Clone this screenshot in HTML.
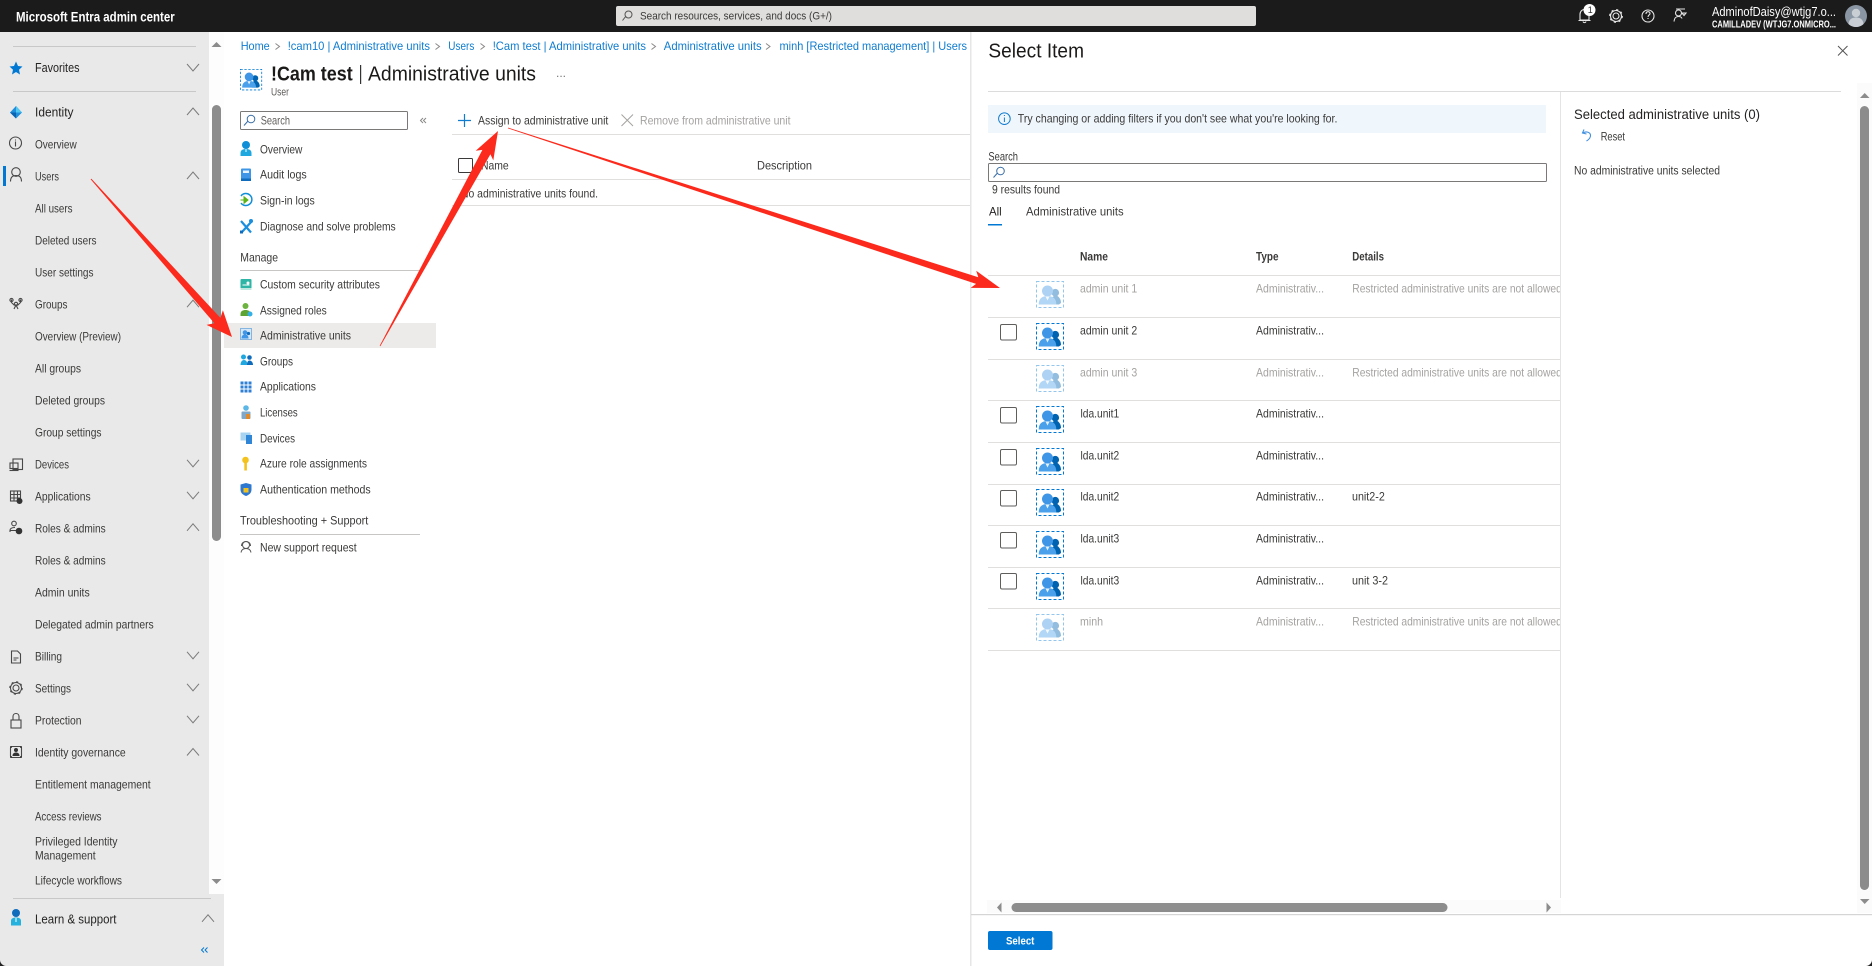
<!DOCTYPE html>
<html lang="en"><head><meta charset="utf-8"><title>Microsoft Entra admin center</title>
<style>
html,body{margin:0;padding:0;width:1872px;height:966px;overflow:hidden;background:#fff}
svg{display:block;font-family:"Liberation Sans",sans-serif}
text{font-size:12px;fill:#3b3a39}
.h{font-size:13px;fill:#252423}
.b{fill:#0f7ccf}
.g{fill:#a5a3a1}
.w{fill:#fff}
.s{fill:none;stroke:#7b7b7b;stroke-width:1}
.ic{fill:none;stroke:#484848;stroke-width:1.1}
.l{fill:#e1dfdd}
</style></head><body>
<svg xmlns="http://www.w3.org/2000/svg" width="1872" height="966" viewBox="0 0 1872 966">
<defs>
<path id="cd" d="M-6-3.5 0 3.5 6-3.5" fill="none" stroke="#7b7b7b"/>
<path id="cu" d="M-6 3.5 0-3.5 6 3.5" fill="none" stroke="#7b7b7b"/>
<path id="gt" d="M-3.5-3 .5 0-3.5 3" fill="none" stroke="#8a8886" transform="translate(0,0)"/>
<g id="au">
<rect x=".5" y=".5" width="27" height="26" fill="#fff" stroke="#0078d4" stroke-dasharray="3 2"/>
<circle cx="19.300" cy="11.700" r="3.800" fill="#0063b1"/><path d="M15 23.500c0-6 2-9 4.500-9s5.500 3 5.500 7.500l-2 1.500z" fill="#0063b1"/>
<circle cx="11.500" cy="10" r="5.500" fill="#3f96e6"/><path d="M2.700 23.500c0-6 3.500-8.500 8.800-8.500s8.800 2.500 8.800 8.500z" fill="#4aa0ea"/><path d="M9.500 15.500l2 4 2-4z" fill="#e6f2fc"/>
</g>
<g id="cb"><rect x=".5" y=".5" width="16" height="15.500" rx="1.500" fill="#fff" stroke="#5f5e5c" stroke-width="1"/></g>
<g id="mag" fill="none" stroke="#3a6ea5" stroke-width="1"><circle cx="2" cy="-2" r="3.800"/><path d="M-1-.000-5 4.500"/></g>
</defs>

<!-- page bg -->
<rect width="1872" height="966" fill="#fff"/>

<!-- sidebar -->
<rect x="0" y="32" width="209" height="934" fill="#e9e9e9"/>
<rect x="209" y="32" width="15" height="862" fill="#fdfdfd"/>
<rect x="209" y="894" width="15" height="72" fill="#e9e9e9"/>
<rect x="212" y="105" width="9" height="436" rx="4.500" fill="#8c8c8c"/>
<path d="M211.500 47 216.500 42 221.500 47z" fill="#8c8c8c"/><path d="M211.500 879 216.500 884 221.500 879z" fill="#8c8c8c"/>
<rect x="13" y="46" width="183" height="1" fill="#c8c8c8"/>
<rect x="13" y="91" width="183" height="1" fill="#c8c8c8"/>
<rect x="13" y="898" width="198" height="1" fill="#c8c8c8"/>
<rect x="3" y="166" width="3" height="20" fill="#0078d4"/>

<text class="h" x="35" y="72" textLength="44.500" lengthAdjust="spacingAndGlyphs">Favorites</text>
<text class="h" x="35" y="116.500" textLength="38.500" lengthAdjust="spacingAndGlyphs">Identity</text>
<text x="35" y="148.500" textLength="41.700" lengthAdjust="spacingAndGlyphs">Overview</text>
<text x="35" y="180.500" textLength="24" lengthAdjust="spacingAndGlyphs">Users</text>
<text x="35" y="212.500" textLength="37.500" lengthAdjust="spacingAndGlyphs">All users</text>
<text x="35" y="244.500" textLength="61.500" lengthAdjust="spacingAndGlyphs">Deleted users</text>
<text x="35" y="276.500" textLength="58.500" lengthAdjust="spacingAndGlyphs">User settings</text>
<text x="35" y="308.500" textLength="32.500" lengthAdjust="spacingAndGlyphs">Groups</text>
<text x="35" y="340.700" textLength="86" lengthAdjust="spacingAndGlyphs">Overview (Preview)</text>
<text x="35" y="372.700" textLength="46" lengthAdjust="spacingAndGlyphs">All groups</text>
<text x="35" y="404.700" textLength="70" lengthAdjust="spacingAndGlyphs">Deleted groups</text>
<text x="35" y="436.700" textLength="66.500" lengthAdjust="spacingAndGlyphs">Group settings</text>
<text x="35" y="468.700" textLength="34" lengthAdjust="spacingAndGlyphs">Devices</text>
<text x="35" y="500.700" textLength="55.700" lengthAdjust="spacingAndGlyphs">Applications</text>
<text x="35" y="532.700" textLength="70.700" lengthAdjust="spacingAndGlyphs">Roles &amp; admins</text>
<text x="35" y="564.700" textLength="70.700" lengthAdjust="spacingAndGlyphs">Roles &amp; admins</text>
<text x="35" y="596.700" textLength="54.700" lengthAdjust="spacingAndGlyphs">Admin units</text>
<text x="35" y="628.700" textLength="118.700" lengthAdjust="spacingAndGlyphs">Delegated admin partners</text>
<text x="35" y="660.700" textLength="27" lengthAdjust="spacingAndGlyphs">Billing</text>
<text x="35" y="692.700" textLength="36" lengthAdjust="spacingAndGlyphs">Settings</text>
<text x="35" y="724.700" textLength="46.500" lengthAdjust="spacingAndGlyphs">Protection</text>
<text x="35" y="756.700" textLength="90.700" lengthAdjust="spacingAndGlyphs">Identity governance</text>
<text x="35" y="788.700" textLength="115.700" lengthAdjust="spacingAndGlyphs">Entitlement management</text>
<text x="35" y="820.700" textLength="66.500" lengthAdjust="spacingAndGlyphs">Access reviews</text>
<text x="35" y="845.700" textLength="82.500" lengthAdjust="spacingAndGlyphs">Privileged Identity</text>
<text x="35" y="859.700" textLength="60.700" lengthAdjust="spacingAndGlyphs">Management</text>
<text x="35" y="884.700" textLength="87" lengthAdjust="spacingAndGlyphs">Lifecycle workflows</text>
<text class="h" x="35" y="923.500" textLength="81.500" lengthAdjust="spacingAndGlyphs">Learn &amp; support</text>

<use href="#cd" x="193" y="67.500"/><use href="#cu" x="193" y="111.500"/><use href="#cu" x="193" y="175.500"/><use href="#cu" x="193" y="303.700"/>
<use href="#cd" x="193" y="463.300"/><use href="#cd" x="193" y="495.300"/><use href="#cu" x="193" y="527.300"/>
<use href="#cd" x="193" y="655.300"/><use href="#cd" x="193" y="687.300"/><use href="#cd" x="193" y="719.300"/><use href="#cu" x="193" y="752"/><use href="#cu" x="208" y="918.300"/>
<path d="M204 947.500l-2.500 2.500 2.500 2.500M207.500 947.500l-2.500 2.500 2.500 2.500" fill="none" stroke="#0078d4"/>

<!-- sidebar icons -->
<polygon points="16,61.500 18,66 22.500,66.500 19,69.700 20,74.500 16,72 12,74.500 13,69.700 9.500,66.500 14,66" fill="#0078d4"/>
<polygon points="16,106 22,112.500 16,118.500 10,112.500" fill="#1f8fdc"/><polygon points="16,106 22,112.500 16,112.500" fill="#50c8f0"/><polygon points="10,112.500 16,118.500 16,112.500" fill="#0a63b0"/>
<circle class="ic" cx="15.500" cy="143" r="6"/><path class="ic" d="M15.500 141.500v5M15.500 139.500v1"/>
<circle class="ic" cx="16" cy="172" r="4.300"/><path class="ic" d="M10.500 181.500c0-4.500 2.500-6 5.500-6s5.500 1.500 5.500 6"/>
<path class="ic" d="M11 302l3 3 4 0 3-3M14 309l2-4 2 4M11.500 299.500v2M20.500 299.500v2" /><circle class="ic" cx="11.500" cy="300" r="1.600"/><circle class="ic" cx="20.500" cy="300" r="1.600"/><circle class="ic" cx="16" cy="304" r="1.700"/>
<rect class="ic" x="13" y="459" width="9.500" height="10.500"/><rect class="ic" x="10" y="463" width="8" height="5.500" fill="#e9e9e9"/><path class="ic" d="M9.500 470.500h9"/>
<rect class="ic" x="10.500" y="491" width="10" height="10"/><path class="ic" d="M14 491v10M17.500 491v10M10.500 494.500h10M10.500 498h10"/><circle cx="19.500" cy="501" r="3" fill="#333"/>
<circle class="ic" cx="14" cy="523.500" r="2.300"/><path class="ic" d="M10 532v-1.500c0-2 2-3 5-3"/><rect x="10" y="530" width="7" height="1" fill="#444"/><circle cx="19" cy="531" r="3.300" fill="#333"/>
<path class="ic" d="M11.500 651h6l3 3v9h-9zM13.500 658h5M13.500 660h3"/>
<circle class="ic" cx="16" cy="688" r="3"/><circle cx="16" cy="688" r="5.500" fill="none" stroke="#484848" stroke-width="1"/><circle cx="16" cy="688" r="6" fill="none" stroke="#484848" stroke-width="1.500" stroke-dasharray="2 2.700"/>
<rect class="ic" x="11" y="720" width="10" height="8"/><path class="ic" d="M13 720v-3.500c0-4 6-4 6 0v3.500"/>
<rect class="ic" x="10.500" y="746.500" width="11" height="11" rx="1.500"/><circle cx="16" cy="750" r="2" fill="#333"/><path d="M12.500 756c0-2.500 1.500-3.500 3.500-3.500s3.500 1 3.500 3.500z" fill="#333"/><circle cx="11" cy="747" r="1" fill="#333"/><circle cx="21" cy="747" r="1" fill="#333"/><circle cx="11" cy="757" r="1" fill="#333"/><circle cx="21" cy="757" r="1" fill="#333"/>
<circle cx="16" cy="913" r="4" fill="#0f6cbd"/><path d="M11 925.500v-4.500c0-2.500 2-3.500 5-3.500s5 1 5 3.500v4.500z" fill="#24b1dd"/><path d="M15.500 918h1v4h-1z" fill="#fff"/>

<!-- top bar -->
<rect width="1872" height="32" fill="#1b1b1b"/>
<text class="w" x="16" y="21.500" font-size="13" font-weight="bold" style="font-size:13.500px;font-weight:bold" textLength="158.700" lengthAdjust="spacingAndGlyphs">Microsoft Entra admin center</text>
<rect x="616" y="6" width="640" height="20" rx="2" fill="#e0dedc"/>
<g transform="translate(627,16)" fill="none" stroke="#555"><circle cx="1.500" cy="-1.500" r="3.500"/><path d="M-1-0-4.500 4.500"/></g>
<text x="640" y="19.700" style="font-size:11px" textLength="192" lengthAdjust="spacingAndGlyphs">Search resources, services, and docs (G+/)</text>

<g fill="none" stroke="#e6e6e6" stroke-width="1.100">
<path d="M1580 20v-5.500c0-3 2-5 4.500-5s4.500 2 4.500 5v5.500zM1578.500 20.500h12M1583 21.500c.5 1.500 2.500 1.500 3 0"/>
<circle cx="1616" cy="16" r="3"/><circle cx="1616" cy="16" r="5.500"/><circle cx="1616" cy="16" r="6" stroke-width="1.800" stroke-dasharray="2 2.700"/>
<circle cx="1648" cy="16" r="6"/><path d="M1646 14c0-3 4-3 4-.5 0 1.500-2 1.500-2 3.500M1648 18v1"/>
<circle cx="1678.500" cy="13" r="3"/><path d="M1674 21.500c.5-4 2-5 4.500-5 1.500 0 3 .5 3.500 2M1676 9h9M1682 13h4l-2 2.500z"/>
</g>
<circle cx="1589.500" cy="10" r="6" fill="#fff"/><text x="1587.700" y="13" style="font-size:9px;fill:#333">1</text>
<text class="w" x="1712" y="16" style="font-size:13px" textLength="124" lengthAdjust="spacingAndGlyphs">AdminofDaisy@wtjg7.o...</text>
<text class="w" x="1712" y="27.500" style="font-size:10px;font-weight:bold" textLength="124" lengthAdjust="spacingAndGlyphs">CAMILLADEV (WTJG7.ONMICRO...</text>
<circle cx="1856" cy="16" r="11" fill="#8a96a3"/><circle cx="1856" cy="13" r="4.200" fill="#c9ced4"/><path d="M1848.500 24c.5-5 3.500-6.500 7.500-6.500s7 1.500 7.500 6.500c-2 2-5 3-7.500 3s-5.500-1-7.500-3z" fill="#c9ced4"/>

<!-- breadcrumb -->
<text class="b" x="240.700" y="50" textLength="29" lengthAdjust="spacingAndGlyphs">Home</text>
<use href="#gt" x="279" y="46.500"/>
<text class="b" x="287.700" y="50" textLength="142.300" lengthAdjust="spacingAndGlyphs">!cam10 | Administrative units</text>
<use href="#gt" x="439" y="46.500"/>
<text class="b" x="448.300" y="50" textLength="26" lengthAdjust="spacingAndGlyphs">Users</text>
<use href="#gt" x="484" y="46.500"/>
<text class="b" x="492.700" y="50" textLength="153.300" lengthAdjust="spacingAndGlyphs">!Cam test | Administrative units</text>
<use href="#gt" x="655" y="46.500"/>
<text class="b" x="663.800" y="50" textLength="97.800" lengthAdjust="spacingAndGlyphs">Administrative units</text>
<use href="#gt" x="769.500" y="46.500"/>
<text class="b" x="779.500" y="50" textLength="187.500" lengthAdjust="spacingAndGlyphs">minh [Restricted management] | Users</text>

<!-- title -->
<g transform="translate(240,69) scale(.79)"><use href="#au"/></g>
<text x="271" y="80.500" style="font-size:20px;font-weight:bold;fill:#1b1a19" textLength="81.700" lengthAdjust="spacingAndGlyphs">!Cam test</text>
<rect x="360" y="65" width="1.200" height="19" fill="#333"/>
<text x="368" y="80.500" style="font-size:20px;fill:#1b1a19" textLength="168" lengthAdjust="spacingAndGlyphs">Administrative units</text>
<text x="556" y="77" style="font-size:12px;fill:#777">...</text>
<text x="271" y="95.500" style="font-size:11px;fill:#605e5c" textLength="18" lengthAdjust="spacingAndGlyphs">User</text>

<!-- blade menu -->
<rect x="240.500" y="111.500" width="167" height="18" rx="1" fill="#fff" stroke="#7a7977"/>
<use href="#mag" x="249" y="121"/>
<text x="260.700" y="124.500" style="fill:#605e5c" textLength="29.300" lengthAdjust="spacingAndGlyphs">Search</text>
<path d="M423 118l-2.500 2.500 2.500 2.500M426 118l-2.500 2.500 2.500 2.500" fill="none" stroke="#8a8886"/>

<rect x="224" y="323" width="212" height="25" fill="#edebe9"/>
<text x="260" y="153.700" textLength="42.300" lengthAdjust="spacingAndGlyphs">Overview</text>
<text x="260" y="178.700" textLength="46.700" lengthAdjust="spacingAndGlyphs">Audit logs</text>
<text x="260" y="204.700" textLength="54.700" lengthAdjust="spacingAndGlyphs">Sign-in logs</text>
<text x="260" y="230.700" textLength="135.700" lengthAdjust="spacingAndGlyphs">Diagnose and solve problems</text>
<text x="240.300" y="261.700" textLength="37.700" lengthAdjust="spacingAndGlyphs">Manage</text>
<rect x="240" y="270" width="180" height="1" fill="#c8c6c4"/>
<text x="260" y="288.700" textLength="120" lengthAdjust="spacingAndGlyphs">Custom security attributes</text>
<text x="260" y="314.700" textLength="66.700" lengthAdjust="spacingAndGlyphs">Assigned roles</text>
<text x="260" y="339.700" textLength="91" lengthAdjust="spacingAndGlyphs">Administrative units</text>
<text x="260" y="365.700" textLength="33" lengthAdjust="spacingAndGlyphs">Groups</text>
<text x="260" y="390.700" textLength="56" lengthAdjust="spacingAndGlyphs">Applications</text>
<text x="260" y="416.700" textLength="37.700" lengthAdjust="spacingAndGlyphs">Licenses</text>
<text x="260" y="442.700" textLength="35" lengthAdjust="spacingAndGlyphs">Devices</text>
<text x="260" y="467.700" textLength="107" lengthAdjust="spacingAndGlyphs">Azure role assignments</text>
<text x="260" y="493.700" textLength="110.700" lengthAdjust="spacingAndGlyphs">Authentication methods</text>
<text x="240" y="524.700" textLength="128.300" lengthAdjust="spacingAndGlyphs">Troubleshooting + Support</text>
<rect x="240" y="534" width="180" height="1" fill="#c8c6c4"/>
<text x="260" y="551.700" textLength="96.700" lengthAdjust="spacingAndGlyphs">New support request</text>

<!-- blade icons -->
<circle cx="246" cy="145" r="4" fill="#0f8fd8"/><path d="M240.500 156v-3c0-3 2.500-4 5.500-4s5.500 1 5.500 4v3z" fill="#1fa7e0"/><path d="M245.500 149h1v3h-1z" fill="#fff"/>
<rect x="241" y="168.500" width="10" height="12.500" rx="1" fill="#3f96e6"/><rect x="243" y="170.500" width="6" height="2.500" fill="#e8f3fc"/><rect x="241" y="178.500" width="10" height="2.500" fill="#0f6cbd"/>
<path d="M241 197a6 6 0 1 1 0 7" fill="none" stroke="#0f8fd8" stroke-width="1.500" transform="translate(0,-1)"/><path d="M240.500 200h5M244 196.700l4 3.300-4 3.300z" fill="#5bb318" stroke="#5bb318"/>
<path d="M241 221l10 11.500M252 221l-10 11" stroke="#1a8fdd" stroke-width="2.200" fill="none"/><circle cx="251" cy="221" r="2" fill="#1a8fdd"/><rect x="240" y="230.500" width="3" height="3" fill="#0f6cbd"/>
<rect x="240.500" y="279" width="11" height="11" rx="1" fill="#2fb5a5"/><rect x="240.500" y="288" width="11" height="2" fill="#bfe8e1"/><circle cx="248" cy="283" r="1.500" fill="#fff"/><path d="M242.500 285h7" stroke="#fff"/>
<circle cx="245.500" cy="306" r="3" fill="#6db33f"/><path d="M240.500 316v-2c0-3 2.500-4 5-4s5 1 5 4v2z" fill="#5ea432"/><circle cx="250" cy="314" r="2.500" fill="#33b0e6"/>
<rect x="240.500" y="328.500" width="11" height="11" fill="#d6e7f7" stroke="#86b6e0"/><circle cx="245" cy="332.500" r="2.300" fill="#3f96e6"/><path d="M241.500 338.500c0-3 1.500-4 3.500-4s3.500 1 3.500 4z" fill="#3f96e6"/><circle cx="248.500" cy="333.500" r="1.600" fill="#0f6cbd"/>
<circle cx="243.500" cy="357" r="2.500" fill="#1fa7e0"/><circle cx="249.500" cy="357.500" r="2.300" fill="#0f6cbd"/><path d="M240.500 365c0-3 1.500-5 3.500-5s3.500 2 3.500 5z" fill="#1fa7e0"/><path d="M247 365c0-3 1-4.500 2.500-4.500s3.500 1.500 3.500 4.500z" fill="#0f6cbd"/>
<g fill="#2f7fd6"><rect x="240.500" y="381.500" width="3" height="3"/><rect x="244.500" y="381.500" width="3" height="3"/><rect x="248.500" y="381.500" width="3" height="3"/><rect x="240.500" y="385.500" width="3" height="3"/><rect x="244.500" y="385.500" width="3" height="3"/><rect x="248.500" y="385.500" width="3" height="3"/><rect x="240.500" y="389.500" width="3" height="3"/><rect x="244.500" y="389.500" width="3" height="3"/><rect x="248.500" y="389.500" width="3" height="3"/></g>
<circle cx="246" cy="408" r="2.800" fill="#5cb6e6"/><rect x="241.500" y="411.500" width="9" height="7.500" rx="1" fill="#7fa8c8"/><rect x="246" y="414" width="4" height="5" fill="#e08a2e"/>
<rect x="240.500" y="432.500" width="10" height="8" fill="#a8d4f2"/><rect x="246" y="435" width="6" height="9" fill="#2f86d6"/>
<circle cx="245.500" cy="460" r="3.300" fill="#f4c21c"/><rect x="244.300" y="462" width="2.600" height="8.500" fill="#f4c21c"/>
<path d="M246 483l5.500 1.500v5c0 3.500-2.500 5.500-5.500 6.500-3-1-5.500-3-5.500-6.500v-5z" fill="#2f78d0"/><rect x="243.500" y="488" width="5" height="4.500" fill="#f4c21c"/>
<circle cx="246" cy="545" r="3.500" fill="none" stroke="#555"/><path d="M241 552.500c.5-3 2.500-4 5-4s4.500 1 5 4M241.500 546c0-6 9-6 9 0" fill="none" stroke="#555"/>

<!-- toolbar & list -->
<path d="M464.500 114v13M458 120.500h13" stroke="#0f7ccf" stroke-width="1.200"/>
<text x="478" y="124.700" textLength="130.300" lengthAdjust="spacingAndGlyphs">Assign to administrative unit</text>
<path d="M621.500 114.500l11.500 11.500M633 114.500l-11.500 11.500" stroke="#a5a3a1" fill="none"/>
<text class="g" x="640" y="124.700" textLength="150.500" lengthAdjust="spacingAndGlyphs">Remove from administrative unit</text>
<rect x="452" y="134" width="518" height="1" class="l"/>
<rect x="458.500" y="158.500" width="14" height="14" rx="1" fill="#fff" stroke="#3b3a39" stroke-width="1"/>
<text x="481" y="169.700" textLength="27.700" lengthAdjust="spacingAndGlyphs">Name</text>
<text x="757" y="169.700" textLength="55" lengthAdjust="spacingAndGlyphs">Description</text>
<rect x="452" y="179" width="518" height="1" class="l"/>
<text x="461" y="197.700" textLength="137" lengthAdjust="spacingAndGlyphs">No administrative units found.</text>
<rect x="452" y="205" width="518" height="1" class="l"/>

<!-- panel -->
<rect x="971" y="32" width="901" height="934" fill="#fff"/>
<rect x="970" y="32" width="1.500" height="934" fill="#e6e6e6"/>
<text x="988.400" y="57.500" style="font-size:20px;fill:#1b1a19" textLength="95.600" lengthAdjust="spacingAndGlyphs">Select Item</text>
<path d="M1838 46l9.500 9.500M1847.500 46l-9.500 9.500" stroke="#555" fill="none"/>
<rect x="988" y="91" width="853" height="1" fill="#dcdcdc"/>
<rect x="1560" y="92" width="1" height="806" fill="#e4e4e4"/>
<rect x="988" y="105" width="558" height="28" fill="#eff6fc"/>
<circle cx="1004.400" cy="118.700" r="5.800" fill="none" stroke="#0f7ccf"/><path d="M1004.400 117.500v4.500M1004.400 115v1" stroke="#0f7ccf"/>
<text x="1017.800" y="122.700" textLength="319.600" lengthAdjust="spacingAndGlyphs">Try changing or adding filters if you don't see what you're looking for.</text>
<text x="988.400" y="160.700" textLength="29.600" lengthAdjust="spacingAndGlyphs">Search</text>
<rect x="988.500" y="163.500" width="558" height="18" rx="1" fill="#fff" stroke="#7a7977"/>
<use href="#mag" x="998.500" y="173"/>
<text x="992" y="193.700" textLength="68" lengthAdjust="spacingAndGlyphs">9 results found</text>
<text class="h" x="989" y="215.500" textLength="12.700" lengthAdjust="spacingAndGlyphs" style="font-size:12px">All</text>
<rect x="988" y="224" width="14" height="1.500" fill="#0078d4"/>
<text x="1026" y="215.500" textLength="97.700" lengthAdjust="spacingAndGlyphs">Administrative units</text>

<g style="font-weight:bold">
<text x="1080" y="260.700" style="font-size:11.500px;font-weight:bold;fill:#3b3a39" textLength="28" lengthAdjust="spacingAndGlyphs">Name</text>
<text x="1256" y="260.700" style="font-size:11.500px;font-weight:bold;fill:#3b3a39" textLength="22.500" lengthAdjust="spacingAndGlyphs">Type</text>
<text x="1352.300" y="260.700" style="font-size:11.500px;font-weight:bold;fill:#3b3a39" textLength="31.700" lengthAdjust="spacingAndGlyphs">Details</text>
</g>
<g class="l">
<rect x="988" y="275" width="572" height="1"/><rect x="988" y="317" width="572" height="1"/><rect x="988" y="359" width="572" height="1"/><rect x="988" y="400" width="572" height="1"/><rect x="988" y="442" width="572" height="1"/><rect x="988" y="484" width="572" height="1"/><rect x="988" y="525" width="572" height="1"/><rect x="988" y="567" width="572" height="1"/><rect x="988" y="608" width="572" height="1"/><rect x="988" y="650" width="572" height="1"/>
</g>
<clipPath id="dc"><rect x="1340" y="270" width="220" height="400"/></clipPath>

<!-- rows -->
<g opacity=".42"><use href="#au" x="1036" y="281"/><use href="#au" x="1036" y="365"/><use href="#au" x="1036" y="614"/></g>
<use href="#au" x="1036" y="323"/><use href="#au" x="1036" y="406"/><use href="#au" x="1036" y="448"/><use href="#au" x="1036" y="489"/><use href="#au" x="1036" y="531"/><use href="#au" x="1036" y="573"/>
<use href="#cb" x="1000" y="324"/><use href="#cb" x="1000" y="407"/><use href="#cb" x="1000" y="449"/><use href="#cb" x="1000" y="490"/><use href="#cb" x="1000" y="532"/><use href="#cb" x="1000" y="573"/>

<text class="g" x="1080" y="292.700" textLength="57.200" lengthAdjust="spacingAndGlyphs">admin unit 1</text>
<text class="g" x="1256" y="292.700" textLength="68" lengthAdjust="spacingAndGlyphs">Administrativ...</text>
<text class="g" clip-path="url(#dc)" x="1352.300" y="292.700" textLength="209.500" lengthAdjust="spacingAndGlyphs">Restricted administrative units are not allowed</text>
<text x="1080" y="334.700" textLength="57.200" lengthAdjust="spacingAndGlyphs">admin unit 2</text>
<text x="1256" y="334.700" textLength="68" lengthAdjust="spacingAndGlyphs">Administrativ...</text>
<text class="g" x="1080" y="376.700" textLength="57.200" lengthAdjust="spacingAndGlyphs">admin unit 3</text>
<text class="g" x="1256" y="376.700" textLength="68" lengthAdjust="spacingAndGlyphs">Administrativ...</text>
<text class="g" clip-path="url(#dc)" x="1352.300" y="376.700" textLength="209.500" lengthAdjust="spacingAndGlyphs">Restricted administrative units are not allowed</text>
<text x="1080.500" y="417.700" textLength="38.700" lengthAdjust="spacingAndGlyphs">lda.unit1</text>
<text x="1256" y="417.700" textLength="68" lengthAdjust="spacingAndGlyphs">Administrativ...</text>
<text x="1080.500" y="459.700" textLength="38.700" lengthAdjust="spacingAndGlyphs">lda.unit2</text>
<text x="1256" y="459.700" textLength="68" lengthAdjust="spacingAndGlyphs">Administrativ...</text>
<text x="1080.500" y="500.700" textLength="38.700" lengthAdjust="spacingAndGlyphs">lda.unit2</text>
<text x="1256" y="500.700" textLength="68" lengthAdjust="spacingAndGlyphs">Administrativ...</text>
<text x="1352" y="500.700" textLength="32.800" lengthAdjust="spacingAndGlyphs">unit2-2</text>
<text x="1080.500" y="542.700" textLength="38.700" lengthAdjust="spacingAndGlyphs">lda.unit3</text>
<text x="1256" y="542.700" textLength="68" lengthAdjust="spacingAndGlyphs">Administrativ...</text>
<text x="1080.500" y="584.700" textLength="38.700" lengthAdjust="spacingAndGlyphs">lda.unit3</text>
<text x="1256" y="584.700" textLength="68" lengthAdjust="spacingAndGlyphs">Administrativ...</text>
<text x="1352" y="584.700" textLength="36" lengthAdjust="spacingAndGlyphs">unit 3-2</text>
<text class="g" x="1080" y="625.700" textLength="23" lengthAdjust="spacingAndGlyphs">minh</text>
<text class="g" x="1256" y="625.700" textLength="68" lengthAdjust="spacingAndGlyphs">Administrativ...</text>
<text class="g" clip-path="url(#dc)" x="1352.300" y="625.700" textLength="209.500" lengthAdjust="spacingAndGlyphs">Restricted administrative units are not allowed</text>

<!-- selected pane -->
<text x="1574" y="119" style="font-size:13.500px;fill:#252423" textLength="186" lengthAdjust="spacingAndGlyphs">Selected administrative units (0)</text>
<path d="M1584 129.500l-1.500 3.500 4 1M1583 133c3-2 7-1 7.500 2 .3 2.500-1.500 4.500-4 6" fill="none" stroke="#3f8fe0" stroke-width="1.100"/>
<text x="1600.700" y="140.700" style="font-size:11.500px" textLength="24.300" lengthAdjust="spacingAndGlyphs">Reset</text>
<text x="1574" y="174.700" style="font-size:11.500px" textLength="146" lengthAdjust="spacingAndGlyphs">No administrative units selected</text>

<!-- scrollbars -->
<rect x="1857" y="83" width="15" height="830" fill="#fbfbfb"/>
<rect x="1860" y="106" width="9" height="784" rx="4.500" fill="#8c8c8c"/>
<path d="M1860 98 1864.700 93 1869.500 98z" fill="#8c8c8c"/><path d="M1860 899 1864.700 904 1869.500 899z" fill="#8c8c8c"/>
<rect x="987" y="900" width="574" height="13" fill="#fbfbfb"/>
<rect x="1011.500" y="903" width="436" height="9" rx="4.500" fill="#8c8c8c"/>
<path d="M1001.500 902.500 997 907.500 1001.500 912.500z" fill="#8c8c8c"/><path d="M1546.500 902.500 1551 907.500 1546.500 912.500z" fill="#8c8c8c"/>
<rect x="971" y="914" width="901" height="1.200" fill="#d5d5d5"/>
<rect x="988" y="931" width="64.500" height="19" rx="2" fill="#0078d4"/>
<text class="w" x="1006" y="944.500" style="font-size:11px;font-weight:bold" textLength="28.400" lengthAdjust="spacingAndGlyphs">Select</text>

<!-- corners -->
<path d="M0 960v6h6c-3 0-6-3-6-6z" fill="#222"/><path d="M1872 960v6h-6c3 0 6-3 6-6z" fill="#222"/>

<!-- red arrows -->
<g fill="#fb2a1c">
<polygon points="90.600,179.300 214.400,323.300 206.500,324.900 232,337 222.900,310.300 220.400,317.900 91.400,178.700"/>
<polygon points="379.700,345.800 482.400,149.900 475.700,150.800 498,131 493.300,160.400 490.400,154.300 380.300,346.200"/>
<polygon points="507.900,128.400 976.100,283.900 970.600,287.900 1000,288 976.200,270.700 978.300,277.300 508.100,127.600"/>
</g>
</svg>
</body></html>
